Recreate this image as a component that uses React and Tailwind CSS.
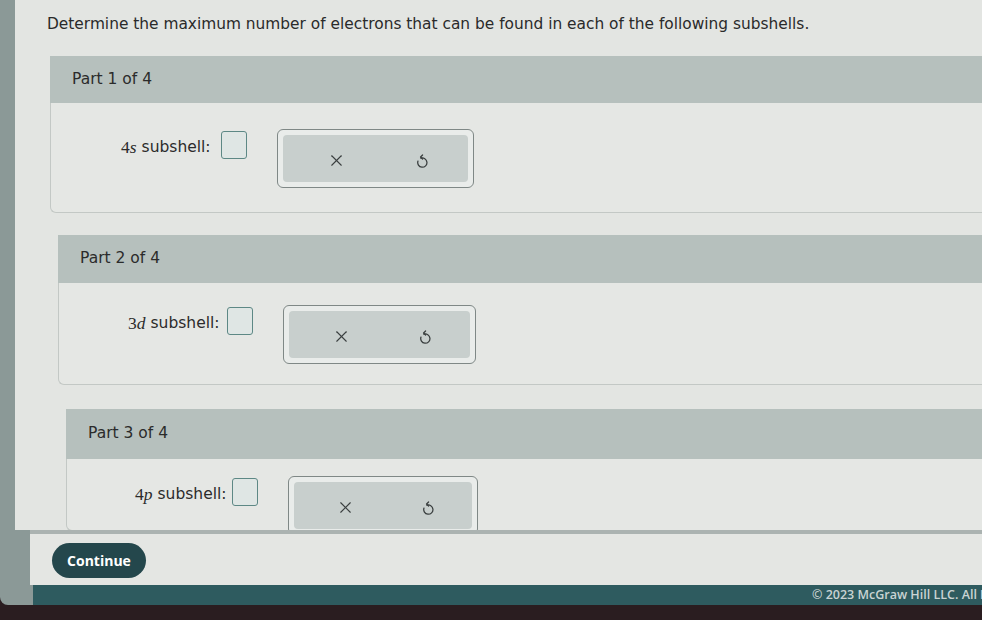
import React from 'react';
import { X } from 'lucide-react';

const parts = [
  { n: 1, orb: 's', ml: 'ml-[35px]', mt: 'mt-[23px]', head: 'h-[47px]', body: 'h-[110px]', pt: 'pt-[26px]', lab: 'ml-[70px]', inp: 'ml-[10px]', box: 'w-[197px]' },
  { n: 2, orb: 'd', ml: 'ml-[43px]', mt: 'mt-[22px]', head: 'h-[48px]', body: 'h-[102px]', pt: 'pt-[22px]', lab: 'ml-[69px]', inp: 'ml-[7px]', box: 'w-[193px]' },
  { n: 3, orb: 'p', ml: 'ml-[51px]', mt: 'mt-[24px]', head: 'h-[50px]', body: 'h-[72px]', pt: 'pt-[17px]', lab: 'ml-[68px]', inp: 'ml-[5px]', box: 'w-[190px]' },
];

const shellNum = { 1: '4', 2: '3', 3: '4' };

// undo arrow, drawn by hand to match the ALEKS one
const UndoIcon = () => (
  <svg width="14" height="15" viewBox="0 0 24 26" fill="none" stroke="#3a3f3f" strokeWidth="2.2" strokeLinecap="round" strokeLinejoin="round">
    <path d="M10 9 A8 8 0 1 1 5 14" />
    <path d="M13 3.5 L9.5 7 L13 10.5" />
  </svg>
);

const Part = ({ part }) => (
  <div className={`${part.ml} ${part.mt}`}>
    <div className={`${part.head} bg-[#b6c0bd] flex items-center pl-[22px] text-[15.5px] text-[#2b2b2b]`}>
      Part {part.n} of 4
    </div>
    <div
      className={`${part.body} ${part.pt} border-l border-b border-[#c3c8c5] rounded-bl-md bg-[#e5e7e4] flex items-start`}
    >
      <div className={`${part.lab} mt-[5px] flex items-center text-[15.5px] text-[#2b2b2b]`}>
        <span className="font-['Liberation_Serif',serif] text-[17.5px]">{shellNum[part.n]}</span>
        <span className="font-['Liberation_Serif',serif] italic text-[17.5px] mr-[5px]">{part.orb}</span>
        <span>subshell:</span>
      </div>
      <div className={`${part.inp} mt-[2px] w-[26px] h-[28px] border border-[#5d8885] rounded-[3px] bg-[#dfe6e4]`} />
      <div className={`ml-[30px] ${part.box} h-[59px] border border-[#7f8886] rounded-md bg-[#e9ecea] p-[5px]`}>
        <div className="w-full h-full bg-[#c8cfcd] rounded flex items-center justify-around pl-[10px] pr-[4px] pt-[3px]">
          <X className="w-[19px] h-[19px] text-[#3a3f3f]" strokeWidth={1.4} />
          <UndoIcon />
        </div>
      </div>
    </div>
  </div>
);

export default function App() {
  return (
    <div className="w-[982px] h-[620px] bg-[#2a1d20] flex flex-col overflow-hidden font-['DejaVu_Sans',sans-serif]">
      <div className="flex h-[530px]">
        <div className="w-[15px] bg-[#8b9997]" />
        <div className="flex-1 bg-[#e3e5e2]">
          <div className="pl-[32px] pt-[15px] text-[15.4px] text-[#2a2a2a] leading-[18px]">
            Determine the maximum number of electrons that can be found in each of the following subshells.
          </div>
          {parts.map(p => (
            <Part key={p.n} part={p} />
          ))}
        </div>
      </div>
      <div className="flex h-[55px]">
        <div className="w-[30px] bg-[#8b9997]" />
        <div className="flex-1 bg-[#e4e6e3] border-t-4 border-[#abb3b1] pl-[22px] pt-[9px]">
          <button className="w-[94px] h-[35px] rounded-full bg-[#24474c] text-white text-[14px] font-bold font-['Open_Sans',sans-serif]">
            Continue
          </button>
        </div>
      </div>
      <div className="flex h-[20px]">
        <div className="w-[33px] bg-[#8b9997] rounded-bl-lg" />
        <div className="flex-1 bg-[#2e5b5f] flex items-center pl-[779px] overflow-hidden">
          <span className="whitespace-nowrap text-[12.5px] font-semibold text-[#c9d3d3] font-['Open_Sans',sans-serif]">
            © 2023 McGraw Hill LLC. All Rights Reserved.
          </span>
        </div>
      </div>
      <div className="flex-1 bg-[#2a1d20]" />
    </div>
  );
}
